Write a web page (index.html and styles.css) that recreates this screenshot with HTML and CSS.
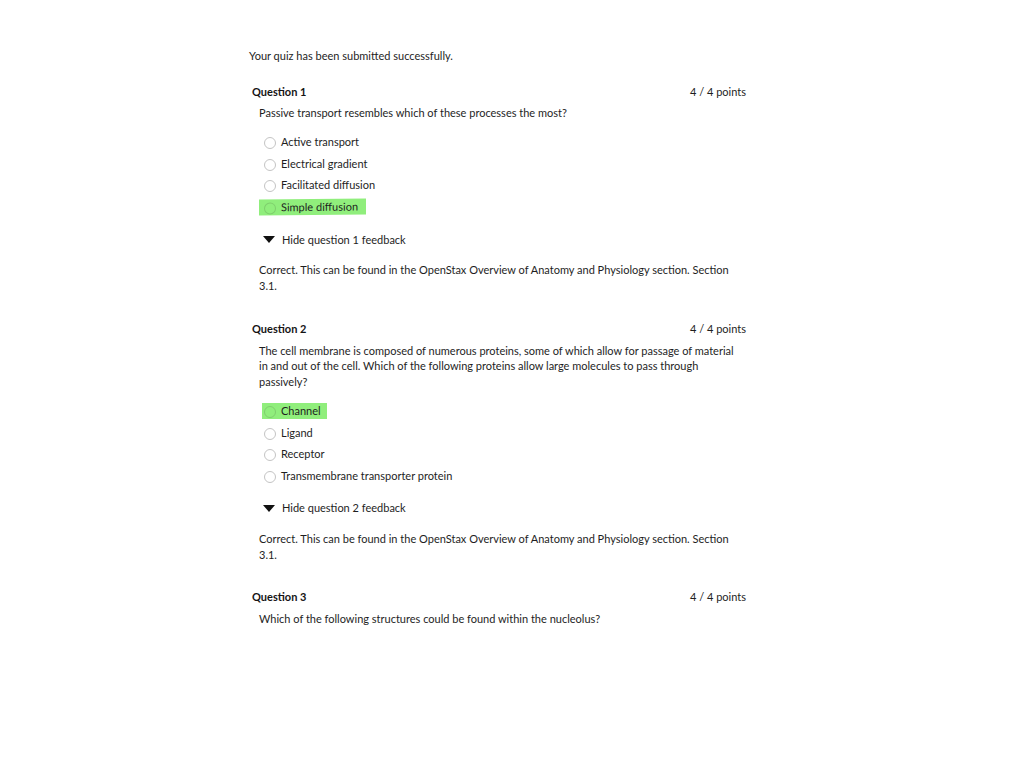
FILE: index.html
```html
<!DOCTYPE html>
<html lang="en">
<head>
<meta charset="utf-8">
<title>Quiz results</title>
<link rel="stylesheet" href="styles.css">
</head>
<body>
<main class="quiz">
  <p class="notice">Your quiz has been submitted successfully.</p>

  <section class="question q1">
    <div class="q-head"><span class="q-title">Question 1</span><span class="q-points">4 / 4 points</span></div>
    <p class="q-text">Passive transport resembles which of these processes the most?</p>
    <ul class="answers">
      <li class="answer"><span class="radio"></span><span>Active transport</span></li>
      <li class="answer"><span class="radio"></span><span>Electrical gradient</span></li>
      <li class="answer"><span class="radio"></span><span>Facilitated diffusion</span></li>
      <li class="answer"><span class="mark mark-a"><span class="radio"></span><span>Simple diffusion</span></span></li>
    </ul>
    <div class="toggle"><span class="tri"></span><span>Hide question 1 feedback</span></div>
    <p class="feedback">Correct. This can be found in the OpenStax Overview of Anatomy and Physiology section. Section 3.1.</p>
  </section>

  <section class="question q2">
    <div class="q-head"><span class="q-title">Question 2</span><span class="q-points">4 / 4 points</span></div>
    <p class="q-text">The cell membrane is composed of numerous proteins, some of which allow for passage of material in and out of the cell. Which of the following proteins allow large molecules to pass through passively?</p>
    <ul class="answers">
      <li class="answer"><span class="mark mark-b"><span class="radio"></span><span>Channel</span></span></li>
      <li class="answer"><span class="radio"></span><span>Ligand</span></li>
      <li class="answer"><span class="radio"></span><span>Receptor</span></li>
      <li class="answer"><span class="radio"></span><span>Transmembrane transporter protein</span></li>
    </ul>
    <div class="toggle"><span class="tri"></span><span>Hide question 2 feedback</span></div>
    <p class="feedback">Correct. This can be found in the OpenStax Overview of Anatomy and Physiology section. Section 3.1.</p>
  </section>

  <section class="question q3">
    <div class="q-head"><span class="q-title">Question 3</span><span class="q-points">4 / 4 points</span></div>
    <p class="q-text">Which of the following structures could be found within the nucleolus?</p>
  </section>
</main>
</body>
</html>
```

FILE: styles.css
```css
html, body {
  margin: 0;
  padding: 0;
  background: #ffffff;
}
body {
  font-family: Lato, "Open Sans", "Liberation Sans", sans-serif;
  font-size: 11px;
  color: #1e1e1e;
}
.quiz {
  margin-left: 249px;
  width: 498px;
  padding-top: 48px;
}
p { margin: 0; }
.notice {
  line-height: 16px;
}
.question {
  margin-top: 20px;
}
.q2 { margin-top: 27px; }
.q3 { margin-top: 26px; }
.q-head {
  display: flex;
  justify-content: space-between;
  line-height: 16px;
  padding-left: 3px;
  padding-right: 1px;
}
.q-title { font-weight: 700; color: #141414; }
.q-text {
  margin-top: 5px;
  padding-left: 10px;
  width: 484px;
  line-height: 15.5px;
}
.q2 .q-text { margin-top: 6px; }
.q3 .q-text { margin-top: 6px; }
.answers {
  list-style: none;
  margin: 11px 0 0;
  padding: 0 0 0 15px;
}
.q2 .answers { margin-top: 11px; }
.answer {
  height: 21.6px;
  display: flex;
  align-items: center;
}
.q2 .answer { height: 21.5px; }
.answer > span, .mark > span { line-height: 16px; }
.radio {
  box-sizing: border-box;
  width: 12px;
  height: 12px;
  border: 1px solid #c4c4c4;
  border-radius: 50%;
  background: #ffffff;
  margin-right: 5px;
  margin-top: 2px;
  flex: none;
}
.mark {
  display: inline-flex;
  align-items: center;
  background: #90ee7c;
  height: 16px;
}
.mark .radio {
  background: transparent;
  border-color: #7fcf6d;
}
.mark-a {
  margin-left: -5px;
  padding: 0 8px 0 5px;
  transform: skewY(-0.6deg);
}
.mark-b {
  margin-left: -2px;
  padding: 0 6px 0 2px;
}
.toggle {
  margin-top: 14px;
  padding-left: 14px;
  display: flex;
  align-items: center;
  line-height: 16px;
}
.tri {
  width: 0;
  height: 0;
  border-left: 6.5px solid transparent;
  border-right: 6.5px solid transparent;
  border-top: 7px solid #111111;
  margin-right: 7px;
}
.feedback {
  margin-top: 14px;
  padding-left: 10px;
  width: 482px;
  line-height: 16px;
}
.q2 .feedback { margin-top: 15px; }
```
